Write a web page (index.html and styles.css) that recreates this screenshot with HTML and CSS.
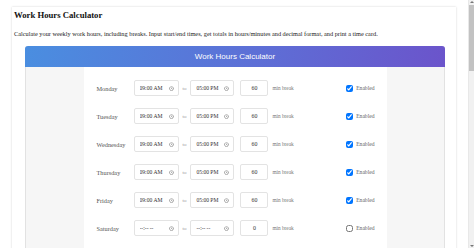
FILE: index.html
```html
<!DOCTYPE html>
<html lang="en">
<head>
<meta charset="utf-8">
<title>Work Hours Calculator</title>
<link rel="stylesheet" href="styles.css">
</head>
<body>
<div class="page">
  <h1 class="title">Work Hours Calculator</h1>
  <p class="intro">Calculate your weekly work hours, including breaks. Input start/end times, get totals in hours/minutes and decimal format, and print a time card.</p>
  <div class="card">
    <div class="card-header">Work Hours Calculator</div>
    <div class="card-body">
      <div class="days">
        <div class="day-row">
          <span class="day-name">Monday</span>
          <input type="time" class="time" value="09:00">
          <span class="to">to</span>
          <input type="time" class="time" value="17:00">
          <input type="number" class="break" value="60">
          <span class="unit">min break</span>
          <label class="enabled"><input type="checkbox" checked><span>Enabled</span></label>
        </div>
        <div class="day-row">
          <span class="day-name">Tuesday</span>
          <input type="time" class="time" value="09:00">
          <span class="to">to</span>
          <input type="time" class="time" value="17:00">
          <input type="number" class="break" value="60">
          <span class="unit">min break</span>
          <label class="enabled"><input type="checkbox" checked><span>Enabled</span></label>
        </div>
        <div class="day-row">
          <span class="day-name">Wednesday</span>
          <input type="time" class="time" value="09:00">
          <span class="to">to</span>
          <input type="time" class="time" value="17:00">
          <input type="number" class="break" value="60">
          <span class="unit">min break</span>
          <label class="enabled"><input type="checkbox" checked><span>Enabled</span></label>
        </div>
        <div class="day-row">
          <span class="day-name">Thursday</span>
          <input type="time" class="time" value="09:00">
          <span class="to">to</span>
          <input type="time" class="time" value="17:00">
          <input type="number" class="break" value="60">
          <span class="unit">min break</span>
          <label class="enabled"><input type="checkbox" checked><span>Enabled</span></label>
        </div>
        <div class="day-row">
          <span class="day-name">Friday</span>
          <input type="time" class="time" value="09:00">
          <span class="to">to</span>
          <input type="time" class="time" value="17:00">
          <input type="number" class="break" value="60">
          <span class="unit">min break</span>
          <label class="enabled"><input type="checkbox" checked><span>Enabled</span></label>
        </div>
        <div class="day-row">
          <span class="day-name">Saturday</span>
          <input type="time" class="time">
          <span class="to">to</span>
          <input type="time" class="time">
          <input type="number" class="break" value="0">
          <span class="unit">min break</span>
          <label class="enabled"><input type="checkbox"><span>Enabled</span></label>
        </div>
        <div class="day-row">
          <span class="day-name">Sunday</span>
          <input type="time" class="time">
          <span class="to">to</span>
          <input type="time" class="time">
          <input type="number" class="break" value="0">
          <span class="unit">min break</span>
          <label class="enabled"><input type="checkbox"><span>Enabled</span></label>
        </div>
        <div class="actions">
          <button class="btn" type="button">Calculate Hours</button>
          <button class="btn" type="button">Print Time Card</button>
        </div>
        <div class="results">
          <div class="result-line"><span>Total hours:</span><span>35h 0m</span></div>
          <div class="result-line"><span>Decimal hours:</span><span>35.00</span></div>
        </div>
      </div>
    </div>
  </div>
</div>
<div class="scrollbar" aria-hidden="true">
  <div class="scroll-arrow up"></div>
  <div class="scroll-track"><div class="scroll-thumb"></div></div>
  <div class="scroll-arrow down"></div>
</div>
</body>
</html>
```

FILE: styles.css
```css
body {
  margin: 0;
  background: #ffffff;
  font-family: "Liberation Serif", "Times New Roman", serif;
  color: #111;
}

.page {
  margin: 7px 18px 0 12px;
  padding: 3px 2px 400px 2px;
  background: #fff;
  box-shadow: 0 0 2px rgba(0, 0, 0, 0.18);
}

.title {
  margin: 0;
  font-size: 8.7px;
  line-height: 10px;
  font-weight: bold;
  color: #111;
}

.intro {
  margin: 10px 0 0 0;
  font-size: 6.3px;
  line-height: 8px;
  color: #222;
}

.card {
  margin: 8px 9px 0 11px;
  border: 1px solid #e2e2e2;
  border-top: none;
  border-radius: 3px 3px 0 0;
  background: #f6f6f6;
}

.card-header {
  height: 21px;
  margin: 0 -1px;
  border-radius: 3px 3px 0 0;
  background: linear-gradient(100deg, #4a8ee0 0%, #5d6fd6 55%, #6b54cb 100%);
  color: #fff;
  font-family: "Liberation Sans", Arial, sans-serif;
  font-size: 8px;
  display: flex;
  align-items: center;
  justify-content: center;
}

.card-body {
  display: flex;
  justify-content: center;
}

.days {
  width: 303px;
  background: #fff;
  padding-top: 7px;
}

.day-row {
  display: flex;
  align-items: center;
  gap: 4px;
  height: 28px;
  padding: 0 12px 0 13px;
}

.day-name {
  width: 33px;
  flex: none;
  font-size: 6.3px;
  color: #555;
}

.time {
  box-sizing: border-box;
  width: 45px;
  height: 16px;
  margin: 0;
  padding: 0 4px 0 5px;
  border: 1px solid #e3e3e3;
  border-radius: 2px;
  background: #fff;
  font-family: "Liberation Serif", "Times New Roman", serif;
  font-size: 5.6px;
  color: #333;
  flex: none;
}
.time + .to + .time {
  width: 44px;
}
.time::-webkit-datetime-edit,
.time::-webkit-datetime-edit-fields-wrapper {
  padding: 0;
}
.time::-webkit-datetime-edit-hour-field,
.time::-webkit-datetime-edit-minute-field,
.time::-webkit-datetime-edit-ampm-field {
  padding: 0;
}
.time::-webkit-calendar-picker-indicator {
  width: 5px;
  height: 5px;
  padding: 0;
  margin: 0 0 0 2px;
  opacity: 0.75;
}

.to {
  font-size: 5px;
  color: #999;
}

.break {
  box-sizing: border-box;
  width: 28px;
  height: 16px;
  margin: 0 0 0 2px;
  padding: 0;
  border: 1px solid #e3e3e3;
  border-radius: 2px;
  text-align: center;
  font-family: "Liberation Serif", "Times New Roman", serif;
  font-size: 5.9px;
  color: #333;
  flex: none;
}
.break::-webkit-inner-spin-button,
.break::-webkit-outer-spin-button {
  -webkit-appearance: none;
  margin: 0;
}

.unit {
  font-size: 5.3px;
  color: #777;
}

.enabled {
  margin-left: auto;
  display: flex;
  align-items: center;
  gap: 3px;
  font-size: 5.6px;
  color: #666;
}
.enabled input {
  width: 7px;
  height: 7px;
  margin: 0;
}

.actions {
  display: flex;
  gap: 8px;
  justify-content: center;
  padding: 12px 0;
}
.btn {
  font-family: "Liberation Sans", Arial, sans-serif;
  font-size: 6px;
  padding: 4px 10px;
  border: none;
  border-radius: 2px;
  background: #4a8ee0;
  color: #fff;
}

.results {
  padding: 8px 13px 40px;
  font-size: 6.3px;
  color: #444;
}
.result-line {
  display: flex;
  justify-content: space-between;
  padding: 3px 0;
  border-bottom: 1px solid #eee;
}

.scrollbar {
  position: fixed;
  top: 0;
  right: 0;
  bottom: 0;
  width: 6px;
  display: flex;
  flex-direction: column;
  background: #f1f1f1;
  border-left: 1px solid #e8e8e8;
  box-sizing: border-box;
}
.scroll-arrow {
  height: 5px;
  flex: none;
  position: relative;
}
.scroll-arrow::after {
  content: "";
  position: absolute;
  left: 1px;
  width: 0;
  height: 0;
  border-left: 2px solid transparent;
  border-right: 2px solid transparent;
}
.scroll-arrow.up::after {
  top: 1px;
  border-bottom: 2px solid #777;
}
.scroll-arrow.down::after {
  bottom: 1px;
  border-top: 2px solid #777;
}
.scroll-track {
  flex: 1;
  padding: 0;
}
.scroll-thumb {
  height: 66px;
  margin: 0 0 0 0;
  background: #c2c2c2;
}
```
